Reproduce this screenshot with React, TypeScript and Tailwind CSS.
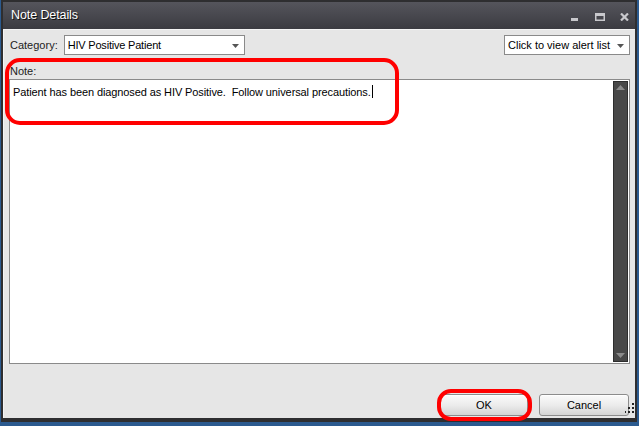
import React from 'react';

const font = { fontFamily: '"Liberation Sans", Arial, sans-serif' };

function Combo({ label, className }: { label: string; className: string }) {
  return (
    <div className={`relative flex h-[20px] items-center border border-[#8a8a8a] bg-white pl-[3px] text-[11px] text-black ${className}`}>
      <span>{label}</span>
      <svg className="absolute right-[5px] top-[8px]" width="7" height="4" viewBox="0 0 7 4">
        <path d="M0 0h7L3.5 4z" fill="#555" />
      </svg>
    </div>
  );
}

function Button({ label }: { label: string }) {
  return (
    <button className="h-[22px] rounded-[3px] border border-[#8c8c8c] bg-gradient-to-b from-[#fbfbfb] via-[#ececec] to-[#d4d4d4] text-[11px] text-black shadow-[inset_0_1px_0_#fff]">
      {label}
    </button>
  );
}

export default function App() {
  return (
    <div className="relative h-[426px] w-[639px] overflow-hidden bg-[#2b5a8f]" style={font}>
      <div className="ml-[1px] flex h-[422px] w-[636px] flex-col border-x-2 border-t-2 border-b-4 border-[#2e2e30] bg-[#2e2e30]">
        {/* title bar */}
        <div className="flex h-[27px] items-center justify-between bg-gradient-to-b from-[#55555c] to-[#3b3b41] pl-[8px] pr-[6px]">
          <span className="text-[12.5px] tracking-[-0.1px] text-white [text-shadow:1px_1px_0_#111]">Note Details</span>
          <div className="flex items-end pt-[2px]">
            <svg width="7" height="8" viewBox="0 0 7 8">
              <rect x="0" y="5" width="7" height="3" fill="#c8c8cc" />
            </svg>
            <svg className="ml-[17px]" width="10" height="8" viewBox="0 0 10 8">
              <rect x="0.75" y="0.75" width="8.5" height="6.5" fill="none" stroke="#c8c8cc" strokeWidth="1.5" />
              <rect x="0" y="0" width="10" height="3" fill="#c8c8cc" />
            </svg>
            <svg className="ml-[15px]" width="9" height="8" viewBox="0 0 9 8">
              <path d="M1 0.5l7 7M8 0.5l-7 7" stroke="#c8c8cc" strokeWidth="2.2" />
            </svg>
          </div>
        </div>
        {/* body */}
        <div className="relative flex flex-1 flex-col border-t border-l border-[#f4f4f4] bg-[#e6e6e6] px-[5px]">
          <div className="mt-[5px] flex items-center justify-between">
            <div className="flex items-center gap-[6px]">
              <span className="pl-[1px] text-[11px] text-[#222]">Category:</span>
              <Combo label="HIV Positive Patient" className="w-[181px] tracking-[-0.2px]" />
            </div>
            <Combo label="Click to view alert list" className="w-[126px]" />
          </div>
          <span className="mt-[9px] pl-[1px] text-[11px] leading-[14px] text-[#222]">Note:</span>
          <div className="mt-[1px] flex h-[285px] border border-[#8a8a8a] bg-white">
            <div className="flex-1 pl-[3px] pt-[3px] text-[11px] tracking-[-0.1px] text-black">
              Patient has been diagnosed as HIV Positive.&nbsp; Follow universal precautions.
              <span className="ml-[1px] inline-block h-[13px] w-px translate-y-[2px] bg-black" />
            </div>
            <div className="m-[1px] flex w-[15px] flex-col items-center justify-between border border-[#2d2d2d] bg-[#484848] py-[3px]">
              <svg width="9" height="5" viewBox="0 0 9 5">
                <path d="M0 5h9L4.5 0z" fill="#8a8a8a" />
              </svg>
              <svg width="9" height="5" viewBox="0 0 9 5">
                <path d="M0 0h9L4.5 5z" fill="#8a8a8a" />
              </svg>
            </div>
          </div>
          <div className="mt-[30px] flex justify-end gap-[11px] pr-[1px]">
            <div className="grid w-[88px]"><Button label="OK" /></div>
            <div className="grid w-[90px]"><Button label="Cancel" /></div>
          </div>
          {/* resize grip */}
          <svg className="absolute bottom-[1px] right-[0px]" width="10" height="14" viewBox="0 0 10 14">
            <g fill="#222">
              <rect x="7" y="0" width="2" height="2" />
              <rect x="7" y="4" width="2" height="2" />
              <rect x="3" y="4" width="2" height="2" />
              <rect x="7" y="8" width="2" height="2" />
              <rect x="3" y="8" width="2" height="2" />
              <rect x="-1" y="8" width="2" height="2" />
            </g>
          </svg>
        </div>
      </div>
      {/* red annotation rings */}
      <div className="absolute left-[5px] top-[58px] h-[67px] w-[394px] rounded-[15px] border-[4px] border-[#ff0000]" />
      <div className="absolute left-[437px] top-[389px] h-[32px] w-[95px] rounded-[14px] border-[4px] border-[#ff0000]" />
    </div>
  );
}
